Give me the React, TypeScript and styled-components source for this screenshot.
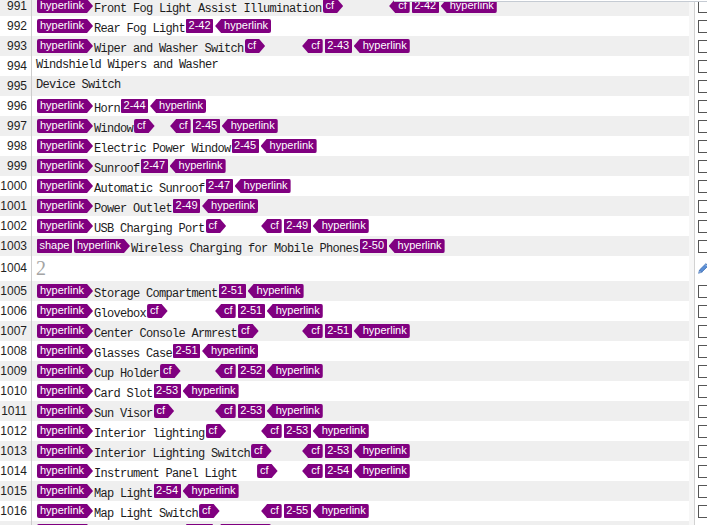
import React from "react";
import styled, { createGlobalStyle } from "styled-components";

const Global = createGlobalStyle`
  html, body { margin: 0; padding: 0; background: #fff; overflow: hidden; }
`;

const Viewport = styled.div`
  position: relative;
  width: 707px;
  height: 525px;
  overflow: hidden;
  background: #fff;
`;

const TopEdge = styled.div`
  position: absolute;
  top: 0;
  left: 394px;
  right: 0;
  height: 1px;
  background: #fff;
  border-bottom: 1px solid #c5cbd3;
  z-index: 2;
`;

const List = styled.div`
  margin-top: -4px;
  display: flex;
  flex-direction: column;
`;

const Row = styled.div<{ $odd: boolean; $h: number }>`
  display: flex;
  height: ${(p) => p.$h}px;
  width: 720px;
  background: ${(p) => (p.$odd ? "#efefef" : "#ffffff")};
`;

const NumCell = styled.div<{ $h: number }>`
  flex: none;
  width: 32px;
  box-sizing: border-box;
  padding-right: 4px;
  text-align: right;
  border-right: 1px solid #cdcdcd;
  font: 12px/${(p) => p.$h}px "Liberation Sans", Arial, sans-serif;
  color: #1e1e1e;
`;

const Content = styled.div`
  flex: none;
  width: 657px;
  box-sizing: border-box;
  padding-left: 4px;
  display: flex;
  align-items: flex-start;
  overflow: hidden;
  white-space: pre;
`;

const Strip = styled.div`
  flex: none;
  width: 5px;
  background: #f7f7f7;
`;

const CheckCell = styled.div`
  flex: none;
  width: 24px;
  box-sizing: border-box;
  border-left: 1px solid #d2d2d2;
  background: #fff;
  padding-left: 3px;
  display: flex;
  align-items: center;
`;

const Checkbox = styled.span`
  display: block;
  width: 13px;
  height: 13px;
  box-sizing: border-box;
  border: 1px solid #555;
  background: #fff;
`;

const Pencil = styled.svg`
  display: block;
  margin-top: -1px;
`;

const Text = styled.span<{ $plain: boolean }>`
  flex: none;
  margin-top: ${(p) => (p.$plain ? "2px" : "6px")};
  font: 12px/14px "Liberation Mono", "Courier New", monospace;
  letter-spacing: -0.7px;
  color: #1c1c1c;
`;

const BigNum = styled.span`
  flex: none;
  font: 20px/25px "Liberation Serif", "Times New Roman", serif;
  color: #a4a4a4;
`;

type Kind = "open" | "close" | "ph";

const Tag = styled.span<{ $kind: Kind }>`
  flex: none;
  height: 14px;
  margin: 3px 1px 0;
  box-sizing: border-box;
  background: #800080;
  color: #fff;
  font: 11px/12px "Liberation Sans", Arial, sans-serif;
  letter-spacing: 0;
  padding: ${(p) =>
    p.$kind === "open" ? "0 9px 0 3px" : p.$kind === "close" ? "0 3px 0 9px" : "0 2.5px"};
  border-radius: ${(p) =>
    p.$kind === "open" ? "2px 0 0 2px" : p.$kind === "close" ? "0 2px 2px 0" : "1px"};
  clip-path: ${(p) =>
    p.$kind === "open"
      ? "polygon(0 0, calc(100% - 6px) 0, 100% 50%, calc(100% - 6px) 100%, 0 100%)"
      : p.$kind === "close"
      ? "polygon(6px 0, 100% 0, 100% 100%, 6px 100%, 0 50%)"
      : "none"};
`;

const Gap = styled.span<{ $w: number }>`
  flex: none;
  width: ${(p) => p.$w}px;
`;

type RowData = { n: number; segs: string[]; big?: string };

const rows: RowData[] = [
  { n: 991, segs: ["{hyperlink", "Front Fog Light Assist Illumination", "{cf", "_44", "cf}", "[2-42]", "hyperlink}"] },
  { n: 992, segs: ["{hyperlink", "Rear Fog Light", "[2-42]", "hyperlink}"] },
  { n: 993, segs: ["{hyperlink", "Wiper and Washer Switch", "{cf", "_35", "cf}", "[2-43]", "hyperlink}"] },
  { n: 994, segs: ["Windshield Wipers and Washer"] },
  { n: 995, segs: ["Device Switch"] },
  { n: 996, segs: ["{hyperlink", "Horn", "[2-44]", "hyperlink}"] },
  { n: 997, segs: ["{hyperlink", "Window", "{cf", "_13.5", "cf}", "[2-45]", "hyperlink}"] },
  { n: 998, segs: ["{hyperlink", "Electric Power Window", "[2-45]", "hyperlink}"] },
  { n: 999, segs: ["{hyperlink", "Sunroof", "[2-47]", "hyperlink}"] },
  { n: 1000, segs: ["{hyperlink", "Automatic Sunroof", "[2-47]", "hyperlink}"] },
  { n: 1001, segs: ["{hyperlink", "Power Outlet", "[2-49]", "hyperlink}"] },
  { n: 1002, segs: ["{hyperlink", "USB Charging Port", "{cf", "_33", "cf}", "[2-49]", "hyperlink}"] },
  { n: 1003, segs: ["[shape]", "{hyperlink", "Wireless Charging for Mobile Phones", "[2-50]", "hyperlink}"] },
  { n: 1004, segs: [], big: "2" },
  { n: 1005, segs: ["{hyperlink", "Storage Compartment", "[2-51]", "hyperlink}"] },
  { n: 1006, segs: ["{hyperlink", "Glovebox", "{cf", "_45.5", "cf}", "[2-51]", "hyperlink}"] },
  { n: 1007, segs: ["{hyperlink", "Center Console Armrest", "{cf", "_41.5", "cf}", "[2-51]", "hyperlink}"] },
  { n: 1008, segs: ["{hyperlink", "Glasses Case", "[2-51]", "hyperlink}"] },
  { n: 1009, segs: ["{hyperlink", "Cup Holder", "{cf", "_32.5", "cf}", "[2-52]", "hyperlink}"] },
  { n: 1010, segs: ["{hyperlink", "Card Slot", "[2-53]", "hyperlink}"] },
  { n: 1011, segs: ["{hyperlink", "Sun Visor", "{cf", "_39", "cf}", "[2-53]", "hyperlink}"] },
  { n: 1012, segs: ["{hyperlink", "Interior lighting", "{cf", "_33", "cf}", "[2-53]", "hyperlink}"] },
  { n: 1013, segs: ["{hyperlink", "Interior Lighting Switch", "{cf", "_28.5", "cf}", "[2-53]", "hyperlink}"] },
  { n: 1014, segs: ["{hyperlink", "Instrument Panel Light", "_19", "{cf", "_22.5", "cf}", "[2-54]", "hyperlink}"] },
  { n: 1015, segs: ["{hyperlink", "Map Light", "[2-54]", "hyperlink}"] },
  { n: 1016, segs: ["{hyperlink", "Map Light Switch", "{cf", "_39.5", "cf}", "[2-55]", "hyperlink}"] },
  { n: 1017, segs: ["{hyperlink", "Reading Lights", "[2-56]", "hyperlink}"] },
];

function renderSeg(s: string, i: number, plain: boolean) {
  if (s.startsWith("{")) return <Tag key={i} $kind="open">{s.slice(1)}</Tag>;
  if (s.endsWith("}")) return <Tag key={i} $kind="close">{s.slice(0, -1)}</Tag>;
  if (s.startsWith("[")) return <Tag key={i} $kind="ph">{s.slice(1, -1)}</Tag>;
  if (s.startsWith("_")) return <Gap key={i} $w={parseFloat(s.slice(1))} />;
  return <Text key={i} $plain={plain}>{s}</Text>;
}

const PencilIcon = () => (
  <Pencil width="11" height="13" viewBox="0 0 12 13">
    <path d="M8.6 1.2 L11 3.6 L4 10.6 L1.6 8.2 Z" fill="#5b8fd6" stroke="#2f63ad" strokeWidth="0.8" />
    <path d="M1.6 8.2 L4 10.6 L0.6 11.8 Z" fill="#9dbbe6" stroke="#2f63ad" strokeWidth="0.6" />
    <path d="M8.2 2.4 L9.8 4" stroke="#cfe0f7" strokeWidth="0.8" />
  </Pencil>
);

export default function App() {
  return (
    <>
      <Global />
      <Viewport>
        <TopEdge />
        <List>
          {rows.map((r) => {
            const h = r.big ? 25 : 20;
            const plain = r.segs.length === 1;
            return (
              <Row key={r.n} $odd={r.n % 2 === 1} $h={h}>
                <NumCell $h={h}>{r.n}</NumCell>
                <Content>
                  {r.big ? <BigNum>{r.big}</BigNum> : r.segs.map((s, i) => renderSeg(s, i, plain))}
                </Content>
                <Strip />
                <CheckCell>{r.big ? <PencilIcon /> : <Checkbox />}</CheckCell>
              </Row>
            );
          })}
        </List>
      </Viewport>
    </>
  );
}
